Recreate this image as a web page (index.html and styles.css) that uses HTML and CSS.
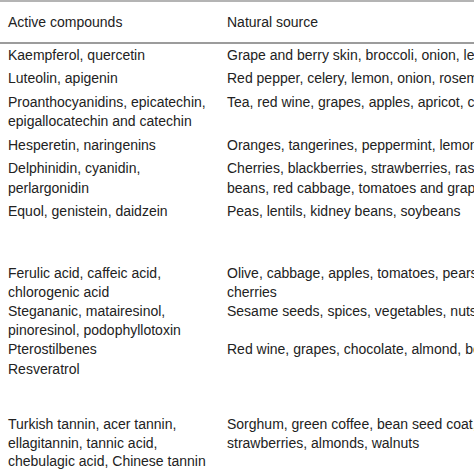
FILE: index.html
```html
<!DOCTYPE html>
<html>
<head>
<meta charset="utf-8">
<link rel="stylesheet" href="styles.css">
</head>
<body>
<div class="page">
<table class="tbl">
<thead>
<tr><th class="c1">Active compounds</th><th class="c2">Natural source</th></tr>
</thead>
<tbody>
<tr><td class="c1">Kaempferol, quercetin</td><td class="c2">Grape and berry skin, broccoli, onion, leek</td></tr>
<tr><td class="c1">Luteolin, apigenin</td><td class="c2">Red pepper, celery, lemon, onion, rosemary</td></tr>
<tr><td class="c1">Proanthocyanidins, epicatechin,<br>epigallocatechin and catechin</td><td class="c2">Tea, red wine, grapes, apples, apricot, cocoa</td></tr>
<tr><td class="c1">Hesperetin, naringenins</td><td class="c2">Oranges, tangerines, peppermint, lemon</td></tr>
<tr><td class="c1">Delphinidin, cyanidin,<br>perlargonidin</td><td class="c2">Cherries, blackberries, strawberries, raspberries,<br>beans, red cabbage, tomatoes and grapes</td></tr>
<tr class="tall"><td class="c1">Equol, genistein, daidzein</td><td class="c2">Peas, lentils, kidney beans, soybeans</td></tr>
<tr class="low"><td class="c1">Ferulic acid, caffeic acid,<br>chlorogenic acid</td><td class="c2">Olive, cabbage, apples, tomatoes, pears,<br>cherries</td></tr>
<tr class="low"><td class="c1">Stegananic, matairesinol,<br>pinoresinol, podophyllotoxin</td><td class="c2">Sesame seeds, spices, vegetables, nuts</td></tr>
<tr class="low tall2"><td class="c1">Pterostilbenes<br>Resveratrol</td><td class="c2">Red wine, grapes, chocolate, almond, berries</td></tr>
<tr class="low last"><td class="c1">Turkish tannin, acer tannin,<br>ellagitannin, tannic acid,<br>chebulagic acid, Chinese tannin</td><td class="c2">Sorghum, green coffee, bean seed coat,<br>strawberries, almonds, walnuts</td></tr>
</tbody>
</table>
</div>
</body>
</html>
```
FILE: styles.css
```css
html, body {
  margin: 0;
  padding: 0;
  background: #fff;
  overflow: hidden;
}
.page {
  width: 474px;
  height: 474px;
  overflow: hidden;
}
.tbl {
  border-collapse: collapse;
  border-top: 2px solid #b4b4b4;
  font-family: "Liberation Sans", Arial, sans-serif;
  font-size: 14px;
  line-height: 19.5px;
  color: #222;
  width: 640px;
}
.tbl th {
  font-weight: normal;
  text-align: left;
  padding: 10.5px 0 9.5px;
  border-bottom: 2px solid #9c9c9c;
  white-space: nowrap;
}
.tbl td {
  vertical-align: top;
  padding: 2px 0 2px;
  white-space: nowrap;
}
.tbl .c1 {
  width: 219px;
  padding-left: 8px;
}
.tbl .tall td {
  padding-bottom: 42px;
}
.tbl .low td {
  padding-top: 0;
  padding-bottom: 0;
  line-height: 19.2px;
}
.tbl .tall2 td {
  padding-bottom: 36.6px;
}
.tbl .last td {
  line-height: 18.5px;
}
```
